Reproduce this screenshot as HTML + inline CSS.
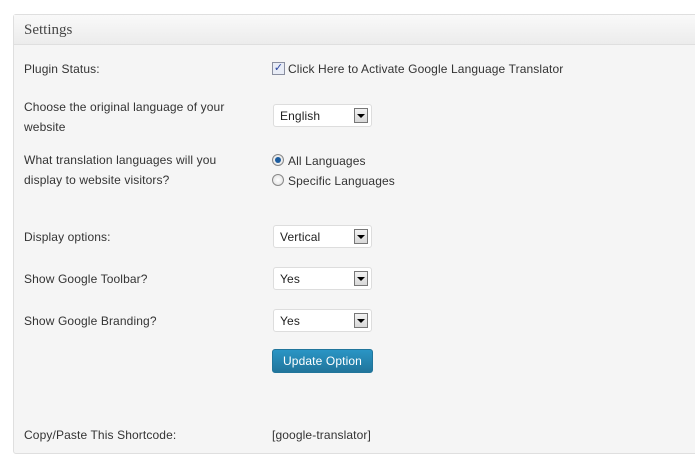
<!DOCTYPE html><html><head><style>
body{margin:0;width:695px;height:475px;background:#fff;font-family:"Liberation Sans",Arial,sans-serif;font-size:12px;letter-spacing:0.12px;color:#333;position:relative;overflow:hidden}
.panel{position:absolute;left:13px;top:14px;width:700px;height:438px;border:1px solid #dfdfdf;border-radius:3px;background:#f5f5f5}
.hd{height:29px;border-bottom:1px solid #dfdfdf;background:linear-gradient(#f9f9f9,#ececec);font-family:"Liberation Serif",Georgia,serif;font-size:15px;letter-spacing:0;color:#464646;line-height:31px;padding-left:10px}
.a{position:absolute;white-space:nowrap}
.sel{position:absolute;left:273px;width:99px;height:23px;background:#fff;border:1px solid #ddd;border-radius:3px;box-sizing:border-box;line-height:22px;padding-left:6px;color:#222}
.sel i{position:absolute;right:3px;top:3px;width:14px;height:15px;border:1px solid #777;background:linear-gradient(#f2f2f2,#d8d8d8);box-sizing:border-box}
.sel i:after{content:"";position:absolute;left:2px;top:5px;border-left:4px solid transparent;border-right:4px solid transparent;border-top:4px solid #000}
.cb{position:absolute;left:272px;top:62px;width:13px;height:13px;border:1px solid #8a8fa0;background:#e8ecf6;box-sizing:border-box;font-size:11px;line-height:11px;color:#2a45a0;text-align:center}
.rd{position:absolute;left:272px;width:12px;height:12px;border-radius:50%;border:1px solid #888;background:radial-gradient(#fff,#ddd);box-sizing:border-box}
.rd.on:after{content:"";position:absolute;left:2px;top:2px;width:6px;height:6px;border-radius:50%;background:#1c5c9e}
.btn{position:absolute;left:272px;top:349px;width:101px;height:24px;border:1px solid #21759b;border-radius:3px;background:linear-gradient(#2a95c5,#21759b);color:#fff;text-align:center;line-height:23px;box-sizing:border-box}
</style></head><body>
<div class="panel"><div class="hd">Settings</div></div>
<div class="a" style="left:24px;top:62px">Plugin Status:</div>
<div class="cb">✓</div><div class="a" style="left:288px;top:62px">Click Here to Activate Google Language Translator</div>
<div class="a" style="left:24px;top:97px;line-height:20px">Choose the original language of your<br>website</div>
<div class="sel" style="top:104px">English<i></i></div>
<div class="a" style="left:24px;top:150px;line-height:20px">What translation languages will you<br>display to website visitors?</div>
<div class="rd on" style="top:154px"></div><div class="a" style="left:288px;top:154px">All Languages</div>
<div class="rd" style="top:174px"></div><div class="a" style="left:288px;top:174px">Specific Languages</div>
<div class="a" style="left:24px;top:230px">Display options:</div>
<div class="sel" style="top:225px">Vertical<i></i></div>
<div class="a" style="left:24px;top:272px">Show Google Toolbar?</div>
<div class="sel" style="top:267px">Yes<i></i></div>
<div class="a" style="left:24px;top:314px">Show Google Branding?</div>
<div class="sel" style="top:309px">Yes<i></i></div>
<div class="btn">Update Option</div>
<div class="a" style="left:24px;top:428px">Copy/Paste This Shortcode:</div>
<div class="a" style="left:272px;top:428px">[google-translator]</div>
</body></html>
